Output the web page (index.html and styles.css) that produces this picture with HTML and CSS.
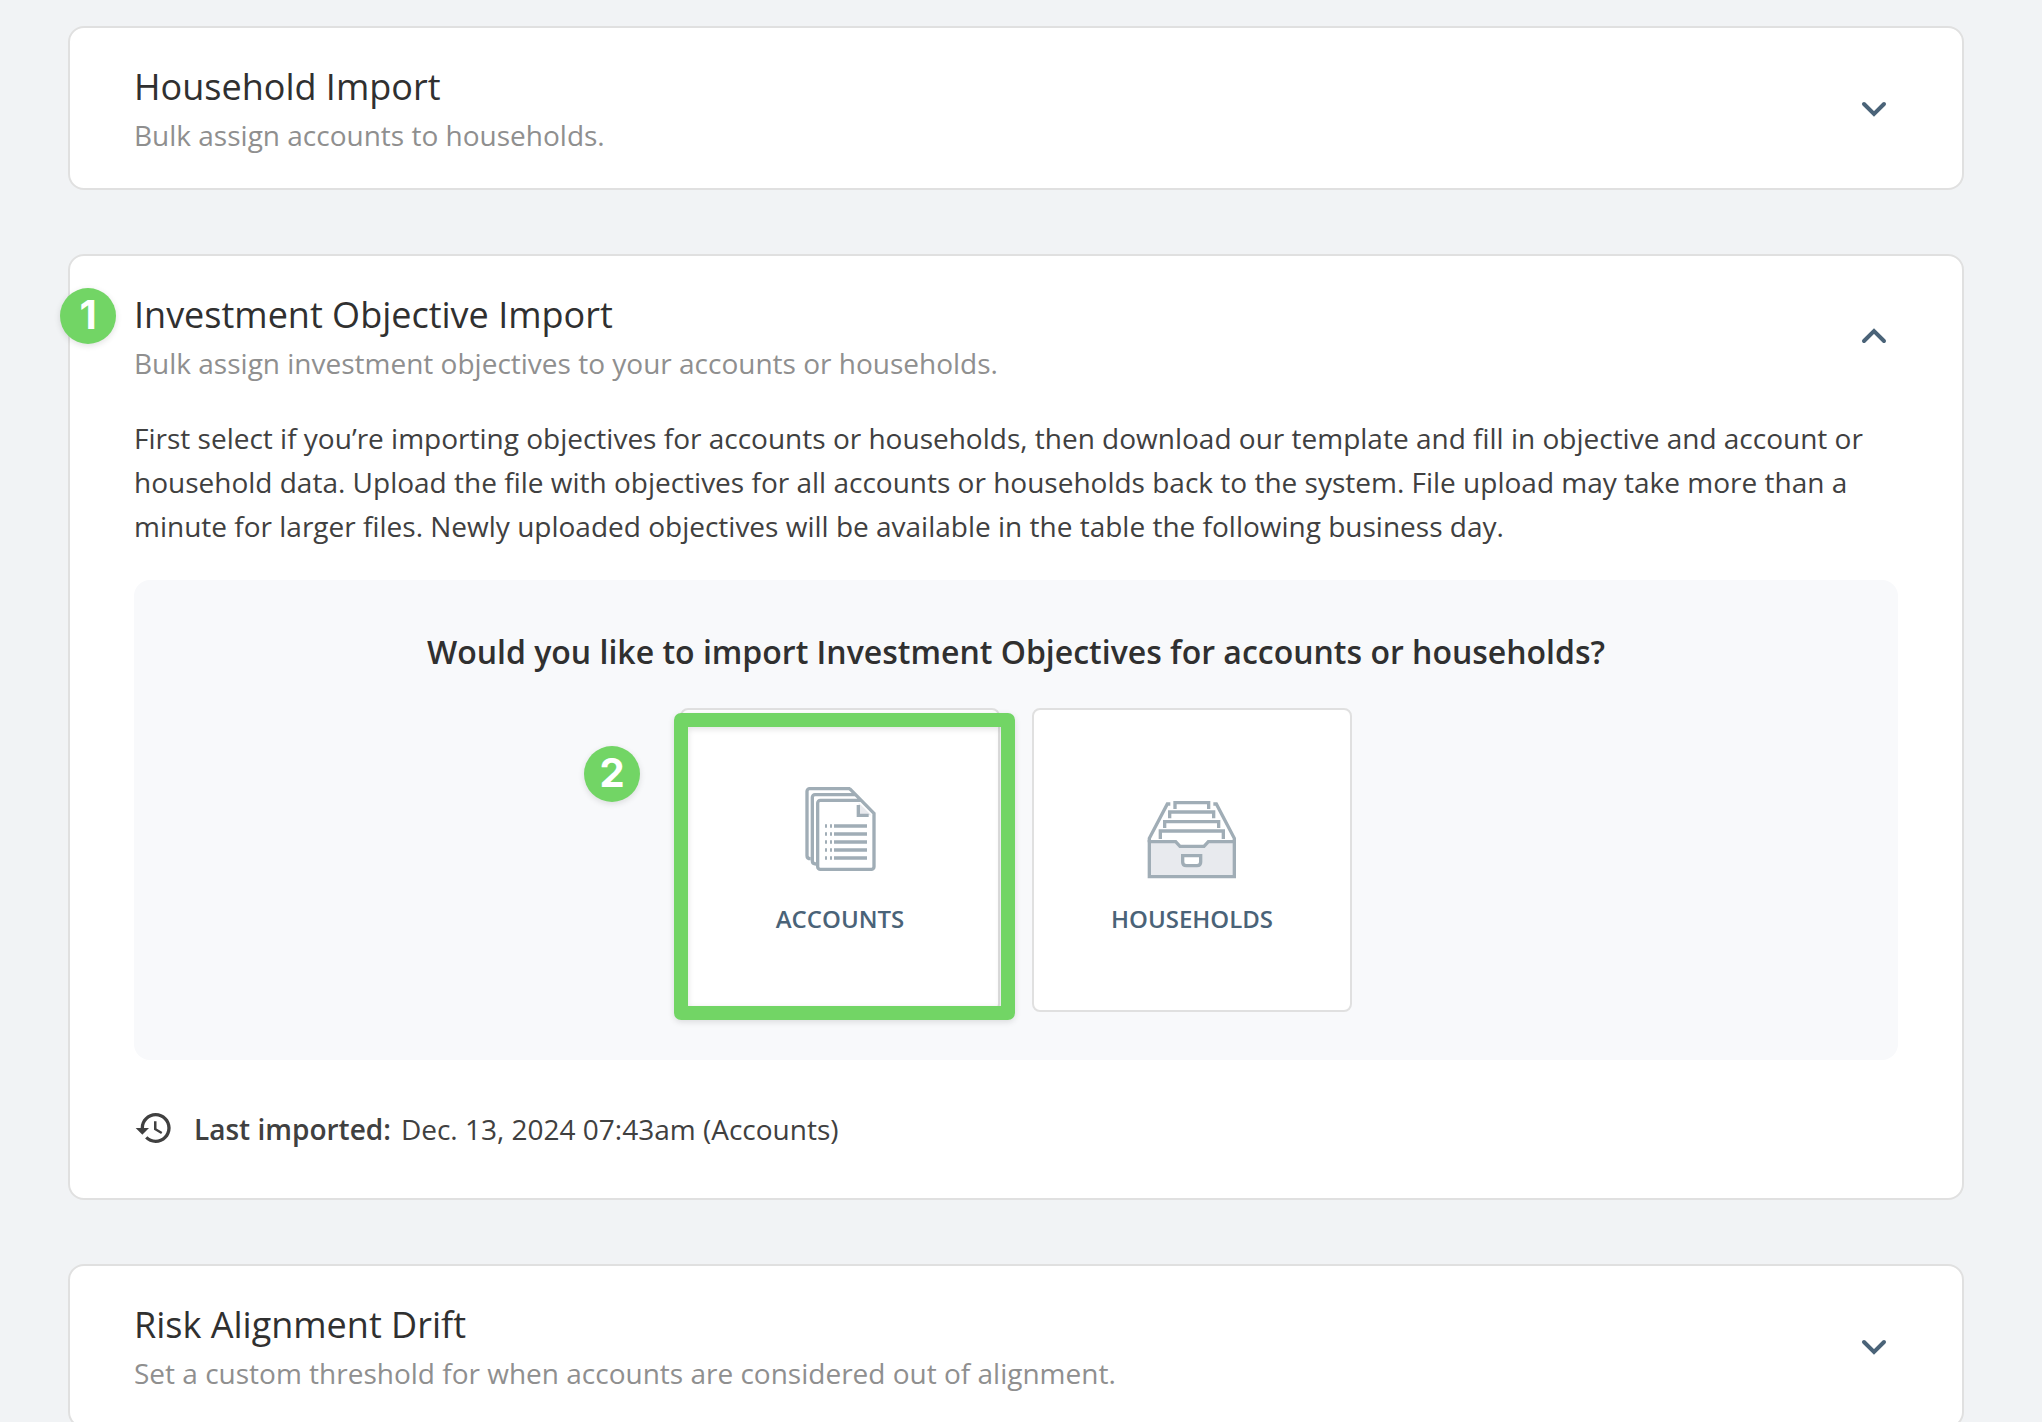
FILE: index.html
```html
<!DOCTYPE html>
<html lang="en">
<head>
<meta charset="utf-8">
<meta name="viewport" content="width=device-width, initial-scale=1">
<title>Imports</title>
<link rel="stylesheet" href="styles.css">
</head>
<body>
<main class="page">
  <section class="card">
    <header class="card-header">
      <div class="card-heading">
        <h2 class="card-title">Household Import</h2>
        <p class="card-subtitle">Bulk assign accounts to households.</p>
      </div>
      <button class="toggle" type="button" aria-expanded="false" aria-label="Expand Household Import">
        <svg class="chevron" viewBox="0 0 48 48" aria-hidden="true"><path d="M14 19l10 10 10-10"/></svg>
      </button>
    </header>
  </section>

  <section class="card">
    <header class="card-header">
      <span class="step step-one">1</span>
      <div class="card-heading">
        <h2 class="card-title">Investment Objective Import</h2>
        <p class="card-subtitle">Bulk assign investment objectives to your accounts or households.</p>
      </div>
      <button class="toggle" type="button" aria-expanded="true" aria-label="Collapse Investment Objective Import">
        <svg class="chevron" viewBox="0 0 48 48" aria-hidden="true"><path d="M14 28l10-10 10 10"/></svg>
      </button>
    </header>
    <div class="card-body">
      <p class="intro">First select if you’re importing objectives for accounts or households, then download our template and fill in objective and account or household data. Upload the file with objectives for all accounts or households back to the system. File upload may take more than a minute for larger files. Newly uploaded objectives will be available in the table the following business day.</p>
      <div class="panel">
        <h3 class="question">Would you like to import Investment Objectives for accounts or households?</h3>
        <div class="choices">
          <div class="choice-slot">
            <button class="choice" type="button">
              <svg class="choice-icon" viewBox="36 45 288 288" aria-hidden="true">
                <path d="M211 56H89a8 8 0 0 0-8 8V257q0 9 11 9"/>
                <path d="M228 74H105a8 8 0 0 0-8 8V273q0 9 11 9"/>
                <path class="shade" d="M236 98l38 38h-38z"/>
                <path d="M242 91H121a8 8 0 0 0-8 8V290a8 8 0 0 0 8 8H274a8 8 0 0 0 8-8V130L209 56"/>
                <path d="M235 105V136H266"/>
                <path d="M162 168H261M162 192H261M162 216H261M162 240H261M162 264H261"/>
                <path d="M135 168h6m9 0h6M135 192h6m9 0h6M135 216h6m9 0h6M135 240h6m9 0h6M135 264h6m9 0h6"/>
              </svg>
              <span>ACCOUNTS</span>
            </button>
            <span class="highlight"></span>
            <span class="step step-two">2</span>
          </div>
          <div class="choice-slot">
            <button class="choice" type="button">
              <svg class="choice-icon" viewBox="42 15 288 288" aria-hidden="true">
                <path class="filled" d="M58 185H137L150 199H222L235 185H313V290H58Z"/>
                <path d="M58 187V175L112 72H121M313 187V175L259 72H250"/>
                <path d="M135 87V68H236V87M119 115V96H251V115M104 144V125H266V144M91 177V153H280V177"/>
                <path class="handle" d="M158 227H212V246q0 11-11 11H169q-11 0-11-11Z"/>
              </svg>
              <span>HOUSEHOLDS</span>
            </button>
          </div>
        </div>
      </div>
      <p class="last-import">
        <svg class="history" viewBox="0 0 24 24" aria-hidden="true"><path d="M13 3c-4.970 0-9 4.030-9 9H1l3.890 3.890.07.140L9 12H6c0-3.870 3.130-7 7-7s7 3.130 7 7-3.130 7-7 7c-1.930 0-3.680-.79-4.940-2.060l-1.420 1.420C8.270 19.990 10.510 21 13 21c4.970 0 9-4.030 9-9s-4.030-9-9-9zm-1 5v5l4.280 2.540.72-1.210-3.500-2.080V8H12z"/></svg>
        <span class="last-text"><strong class="last-label">Last imported:</strong> <span>Dec. 13, 2024 07:43am (Accounts)</span></span>
      </p>
    </div>
  </section>

  <section class="card">
    <header class="card-header">
      <div class="card-heading">
        <h2 class="card-title">Risk Alignment Drift</h2>
        <p class="card-subtitle">Set a custom threshold for when accounts are considered out of alignment.</p>
      </div>
      <button class="toggle" type="button" aria-expanded="false" aria-label="Expand Risk Alignment Drift">
        <svg class="chevron" viewBox="0 0 48 48" aria-hidden="true"><path d="M14 19l10 10 10-10"/></svg>
      </button>
    </header>
  </section>
</main>
</body>
</html>
```
FILE: styles.css
```css
* {
  box-sizing: border-box;
}

body {
  margin: 0;
  background: #f1f3f5;
  color: #404040;
  font-family: "Open Sans", sans-serif;
  font-size: 28px;
  line-height: 44px;
}

h2, h3, p {
  margin: 0;
}

button {
  font: inherit;
  cursor: pointer;
}

.page {
  display: flex;
  flex-direction: column;
  gap: 64px;
  padding: 26px 78px 0 68px;
}

.card {
  background: #fff;
  border: 2px solid #e0e0e0;
  border-radius: 16px;
}

.card-header {
  position: relative;
  display: flex;
  align-items: center;
  justify-content: space-between;
  padding: 35px 64px 33px;
}

.card-heading {
  display: flex;
  flex-direction: column;
  gap: 4px;
}

.card-title {
  color: #303030;
  font-size: 36px;
  font-weight: 400;
  line-height: 48px;
}

.card-subtitle {
  color: #8f8f8f;
  line-height: 40px;
}

.toggle {
  display: flex;
  padding: 0;
  border: 0;
  background: none;
}

.chevron {
  width: 48px;
  height: 48px;
  fill: none;
  stroke: #4a6378;
  stroke-width: 4;
  stroke-linecap: round;
}

.card-body {
  padding: 0 64px 48px;
}

.panel {
  margin: 32px 0 48px;
  padding: 48px;
  border-radius: 16px;
  background: #f8f9fb;
}

.question {
  color: #303030;
  font-size: 32px;
  font-weight: 600;
  line-height: 48px;
  text-align: center;
}

.choices {
  display: flex;
  justify-content: center;
  gap: 32px;
  margin-top: 32px;
}

.choice-slot {
  position: relative;
}

.choice {
  display: flex;
  flex-direction: column;
  align-items: center;
  justify-content: center;
  gap: 22px;
  width: 320px;
  height: 304px;
  padding: 0;
  border: 2px solid #e0e0e0;
  border-radius: 8px;
  background: #fff;
  color: #4a6378;
  font-size: 24px;
  font-weight: 600;
  line-height: 32px;
}

.choice-icon {
  width: 96px;
  height: 96px;
  fill: none;
  stroke: #a0adb6;
  stroke-width: 10;
}

.choice-icon .filled {
  fill: #e8eaee;
}

.choice-icon .shade {
  fill: #e8eaee;
  stroke: none;
}

.choice-icon .handle {
  fill: #fff;
}

.highlight {
  position: absolute;
  inset: 5px -15px -8px -6px;
  border: 14px solid #72d565;
  border-radius: 7px;
  box-shadow: 0 2px 6px rgba(0, 0, 0, 0.12), inset 0 2px 6px rgba(0, 0, 0, 0.12);
  pointer-events: none;
}

.step {
  position: absolute;
  display: flex;
  align-items: center;
  justify-content: center;
  width: 56px;
  height: 56px;
  padding-bottom: 2px;
  border-radius: 50%;
  background: #72d565;
  box-shadow: 0 2px 6px rgba(0, 0, 0, 0.12);
  color: #fff;
  font-family: Inter, sans-serif;
  font-size: 40px;
  font-weight: 700;
}

.step-one {
  top: 32px;
  left: -10px;
}

.step-two {
  top: 38px;
  left: -96px;
}

.last-import {
  display: flex;
  align-items: center;
  gap: 20px;
}

.history {
  width: 40px;
  height: 40px;
  margin-bottom: 2px;
  fill: #404040;
}

.last-text {
  display: flex;
  gap: 10px;
  line-height: 42px;
}

.last-label {
  font-weight: 600;
}
```
